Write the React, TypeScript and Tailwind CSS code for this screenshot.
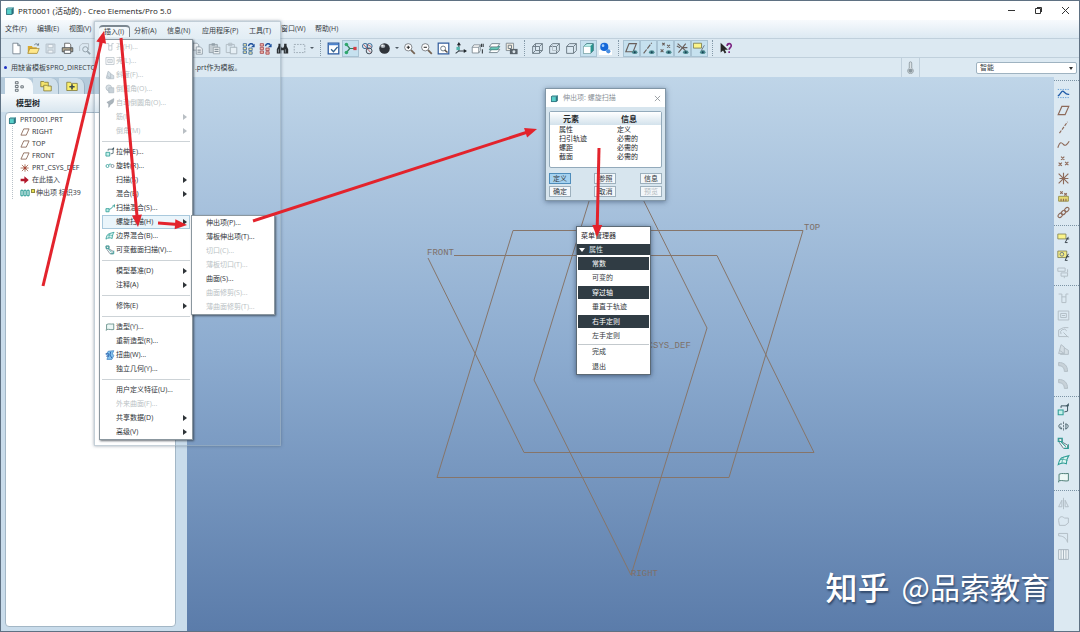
import React, { useState } from "react";
import clsx from "clsx";

const line = { fill: "none", stroke: "#6f7d88", strokeWidth: 1.2 };
const pale = { fill: "none", stroke: "#b3bec6", strokeWidth: 1.2 };
const teal = { fill: "none", stroke: "#2f9d96", strokeWidth: 1.3 };
const brown = { fill: "none", stroke: "#8d6a5a", strokeWidth: 1.4 };

const eye = (
  <>
    <ellipse cx="12" cy="12.5" rx="3.4" ry="2.4" fill="#4c8b8f" />
    <circle cx="12" cy="12.5" r="1.2" fill="#173f55" />
  </>
);

// All drawings use a 16x16 box
const icons: Record<string, React.ReactNode> = {
  cube: (
    <>
      <path d="M2 4l3-2h9v10l-3 2H2z" fill="#2d7480" />
      <path d="M2.5 4.5h8.5v9H2.5z" fill="#58cfc9" stroke="#27616e" />
      <path d="M3 4l2-1.5h8.5L11 4z" fill="#b9f1ee" />
    </>
  ),
  new: <path d="M3.5 1.5h6l3 3v10h-9zM9.5 1.5v3h3" fill="#fff" stroke="#6f7d88" />,
  open: (
    <>
      <path d="M1 5h5l1 1.5h5V14H1z" fill="#d9a92e" />
      <path d="M3.5 8H15l-2.5 6H1z" fill="#ffe88a" stroke="#9c8434" strokeWidth=".8" />
      <path d="M9 3.5c2-2 4-1.5 5 .5m0 0l.3-2.3M14 4l-2-.4" {...line} />
    </>
  ),
  save: (
    <>
      <path d="M2.5 2.5h11v11h-11z" fill="#d3dee6" stroke="#b3bec6" />
      <path d="M5 3h6v4H5zM5 10h6v3.5H5z" fill="#f0f5f8" stroke="#b3bec6" />
    </>
  ),
  print: (
    <>
      <path d="M4.5 7V1.5h6l1.5 2V7" fill="#fff" stroke="#555" />
      <path d="M1.5 7h13v5h-13z" fill="#b6aa92" stroke="#40464b" />
      <path d="M4 10h8v4H4z" fill="#fff" stroke="#40464b" />
      <path d="M11 8.5h2" stroke="#2a2a2a" />
    </>
  ),
  preview: (
    <>
      <path d="M2 11V5l3-3h8v8" {...pale} />
      <circle cx="9" cy="9" r="3.2" {...line} stroke="#93a1ab" />
      <path d="M11.5 11.5L15 15" {...line} stroke="#93a1ab" strokeWidth="2" />
    </>
  ),
  copy: (
    <>
      <path d="M2.5 1.5h5l2 2V10h-7z" fill="#eef3f6" stroke="#8b98a1" />
      <path d="M6.5 6h5l2.5 2.5V15H6.5z" fill="#eef3f6" stroke="#8b98a1" />
      <path d="M8 10h4M8 12.5h4" {...line} />
    </>
  ),
  paste: (
    <>
      <path d="M1.5 3h10v10h-10z" fill="#c5ced4" stroke="#929fa8" />
      <path d="M4.5 1.5h4v3h-4z" fill="#929fa8" />
      <path d="M6.5 6.5h8v8h-8z" fill="#eff3f5" stroke="#929fa8" />
      <path d="M8 9h5M8 11.5h5" {...line} />
    </>
  ),
  pasteSpecial: (
    <>
      <path d="M1.5 3h10v10h-10z" {...pale} />
      <path d="M4.5 1.5h4v3h-4z" {...pale} />
      <path d="M6.5 6.5h8v8h-8z" fill="#e6eff5" stroke="#9eabb4" />
    </>
  ),
  regen: (
    <>
      <path d="M1.5 2h4v3h-4zM1.5 6.5h4v3h-4zM1.5 11h4v3h-4zM8.5 7.5h4v3h-4zM8.5 12h4v3h-4z" fill="#f4e7a4" stroke="#38689a" />
      <path d="M8 5c.5-3 4-4 6-1.5" fill="none" stroke="#1c4f9c" strokeWidth="1.8" />
      <path d="M15.5 2v4.5H11z" fill="#1c4f9c" />
    </>
  ),
  regenMgr: (
    <>
      <path d="M1.5 2h4v3h-4zM1.5 6.5h4v3h-4zM1.5 11h4v3h-4zM8.5 7.5h4v3h-4zM8.5 12h4v3h-4z" fill="#f2b8ac" stroke="#a2474d" />
      <path d="M8 5c.5-3 4-4 6-1.5" fill="none" stroke="#1c4f9c" strokeWidth="1.8" />
      <path d="M15.5 2v4.5H11z" fill="#1c4f9c" />
    </>
  ),
  find: (
    <>
      <path d="M3 2h3v3l1 2h2l1-2V2h3v3l2 4v5H9.5v-4h-3v4H1V9l2-4z" fill="#2b2f33" />
      <path d="M3 9v4M11.5 9v4" stroke="#9aa4ab" />
    </>
  ),
  marquee: <path d="M1.5 3h13v10h-13z" fill="none" stroke="#8f9da7" strokeDasharray="2 1.5" />,
  redraw: (
    <>
      <path d="M1.5 1.5h13v13h-13z" fill="#fff" stroke="#2a5aa0" strokeWidth="1.6" />
      <path d="M2 2h12v2H2z" fill="#4b83cf" />
      <path d="M5 9l3 3 5-6" fill="none" stroke="#35638f" strokeWidth="1.7" />
    </>
  ),
  spin: (
    <>
      <path d="M3 3l4 5h7M7 8l-4 5" fill="none" stroke="#31805c" strokeWidth="1.5" />
      <circle cx="3" cy="3" r="2.2" fill="#2fa76c" />
      <circle cx="3" cy="13" r="2.2" fill="#2fa76c" />
      <rect x="11.5" y="6" width="4" height="4" fill="#d33d44" />
    </>
  ),
  orient: (
    <>
      <circle cx="5" cy="5" r="3.2" {...line} stroke="#356a96" />
      <circle cx="10.5" cy="5" r="3.2" {...line} stroke="#356a96" />
      <circle cx="10" cy="11" r="3.6" {...line} stroke="#3e4a55" />
      <path d="M3 3l9 10M8 3l5 3" stroke="#b04c50" />
    </>
  ),
  ball: (
    <>
      <circle cx="8" cy="8" r="6.5" fill="#2f343a" />
      <ellipse cx="6" cy="5" rx="3" ry="2.3" fill="#a9b1b8" />
      <ellipse cx="5.5" cy="4.5" rx="1.3" ry="1" fill="#f4f6f7" />
    </>
  ),
  zoomIn: (
    <>
      <circle cx="6.5" cy="6.5" r="4.5" fill="#fff" stroke="#6a6f75" />
      <path d="M4.5 6.5h4M6.5 4.5v4" stroke="#27292b" strokeWidth="1.3" />
      <path d="M10 10l4.5 4.5" stroke="#756353" strokeWidth="2.2" />
    </>
  ),
  zoomOut: (
    <>
      <circle cx="6.5" cy="6.5" r="4.5" fill="#fff" stroke="#6a6f75" />
      <path d="M4.5 6.5h4" stroke="#27292b" strokeWidth="1.3" />
      <path d="M10 10l4.5 4.5" stroke="#756353" strokeWidth="2.2" />
    </>
  ),
  refit: (
    <>
      <path d="M1.5 1.5h13v13h-13z" fill="#fff" stroke="#335e9d" strokeWidth="1.5" />
      <circle cx="7.5" cy="8" r="3" {...line} />
      <path d="M9.5 10l3.5 3" stroke="#5b5149" strokeWidth="1.8" />
    </>
  ),
  reorient: (
    <>
      <path d="M6 2v9h8M6 11l-4 3" fill="none" stroke="#333b42" strokeWidth="1.3" />
      <path d="M6 0L3.5 4h5zM16 11l-4-2.5v5z" fill="#23292e" />
      <path d="M3 6h4v4H3z" fill="#50b7ae" />
    </>
  ),
  views: (
    <>
      <path d="M1.5 6.5h8v7h-8zM1.5 6.5l2-3h8l-2 3M11.5 3.5v7l-2 3" fill="#fff" stroke="#75818a" />
      <path d="M13 2v4M15 2v4M14 9v5" stroke="#33393e" strokeWidth="1.3" />
    </>
  ),
  layers: (
    <>
      <path d="M1.5 13l3-4h10l-3 4z" fill="#fff" stroke="#657580" />
      <path d="M1.5 9.5l3-4h10l-3 4z" fill="#68c8b8" stroke="#39817b" />
      <path d="M1.5 6l3-4h10l-3 4z" fill="#fff" stroke="#657580" />
    </>
  ),
  viewMgr: (
    <>
      <path d="M1.5 1.5h9v9h-9z" fill="#f3eee2" stroke="#75818a" />
      <path d="M4 4h4v4H4z" {...line} />
      <path d="M6 8.5h9.5V15H6z" fill="#59636b" />
      <circle cx="11" cy="12" r="1.8" fill="#d9e2e8" />
    </>
  ),
  wire: (
    <path d="M2 5.5h8.5V14H2zM5.5 2H14v8.5H5.5zM2 5.5L5.5 2M10.5 5.5L14 2M10.5 14l3.5-3.5M2 14l3.5-3.5" {...line} />
  ),
  hidden: (
    <>
      <path d="M2 5.5h8.5V14H2zM2 5.5L5.5 2H14v8.5L10.5 14M10.5 5.5L14 2" {...line} />
      <path d="M5.5 3v7.5H13" {...pale} />
    </>
  ),
  noHidden: <path d="M2 5.5h8.5V14H2zM2 5.5L5.5 2H14v8.5L10.5 14M10.5 5.5L14 2" {...line} />,
  shaded: (
    <>
      <path d="M2 5.5L5.5 2H14v8.5L10.5 14H2z" fill="#27958f" stroke="#43757d" />
      <path d="M2 5.5h8.5V14H2z" fill="#fff" />
      <path d="M2.5 5L6 2.5h7L10.5 5z" fill="#b9eeea" />
    </>
  ),
  realism: (
    <>
      <path d="M0 10h16v6H0z" fill="#fff" />
      <circle cx="6.5" cy="6" r="5" fill="#1668d8" />
      <circle cx="5" cy="4.5" r="1.6" fill="#a5d0ff" />
      <circle cx="11.5" cy="11.5" r="2.6" fill="#4b8fe2" />
    </>
  ),
  planeShow: (
    <>
      <path d="M1 12L5 2h9l-4 10z" {...brown} stroke="#695f5b" />
      {eye}
    </>
  ),
  axisShow: (
    <>
      <path d="M2 14L12 1" {...brown} stroke="#695f5b" strokeDasharray="6 1.5" />
      {eye}
    </>
  ),
  pointShow: (
    <>
      <path d="M2 9l3.5 3.5M5.5 9L2 12.5M4 1l3 3M7 1L4 4M10 3.5l3.5 3.5M13.5 3.5L10 7" {...brown} stroke="#695f5b" />
      {eye}
    </>
  ),
  csysShow: (
    <>
      <path d="M2 2l10 9M12 2L3 13M7 7h7M1 5l4 2" {...brown} stroke="#695f5b" />
      {eye}
    </>
  ),
  noteShow: (
    <>
      <path d="M.5 1.5h10v6H.5z" fill="#fbf48a" stroke="#77774a" />
      <path d="M14 4l-4 7h4" {...line} />
      {eye}
    </>
  ),
  help: (
    <>
      <path d="M2 1v12l3-2.5L7 14l2-1-2-3.5h4z" fill="#272727" />
      <path d="M10 5c0-4 5.5-4 5 0 0 2-2.5 2-2.5 4.5M12.5 11.5v2" fill="none" stroke="#7c2483" strokeWidth="2" />
    </>
  ),
  sketch: (
    <>
      <path d="M1 3h14M1 13h14" stroke="#4b8ed0" strokeDasharray="1.5 1.5" />
      <path d="M1 11c3-1 4-6 6-6s3 5 8 4" fill="none" stroke="#1f5ba8" strokeWidth="1.5" />
    </>
  ),
  plane: <path d="M1.5 13L6 3h8.5L10 13z" {...brown} />,
  axis: <path d="M3 15L13 1" {...brown} strokeDasharray="4 1.5" />,
  curve: <path d="M1 12C4 3 6 6 8 8s4 1 7-4" {...brown} />,
  points: <path d="M2 9.5l4 4M6 9.5l-4 4M5 2l4 4M9 2L5 6M10 8.5l4 4M14 8.5l-4 4" {...brown} />,
  csys: <path d="M8 1v14M2 2l12 12M14 2L2 14M3 8h11" {...brown} />,
  analysis: (
    <>
      <path d="M2 9h12v6H2z" fill="#e7db74" stroke="#8e863e" />
      <path d="M5 12v3M8 12v3M11 12v3M4 3l3 3M7 3L4 6M9 5l3 3M12 5L9 8" {...brown} />
    </>
  ),
  refs: (
    <>
      <ellipse cx="4" cy="11.5" rx="3" ry="2.2" transform="rotate(-45 4 11.5)" {...brown} />
      <ellipse cx="8" cy="8" rx="3" ry="2.2" transform="rotate(-45 8 8)" {...brown} />
      <ellipse cx="12" cy="4.5" rx="3" ry="2.2" transform="rotate(-45 12 4.5)" {...brown} />
    </>
  ),
  note: (
    <>
      <path d="M1 2.5h10v6H1z" fill="#fbf48a" stroke="#7f7f50" />
      <path d="M14 6l-4 7h3M11 8.5h4" {...line} stroke="#39444c" />
    </>
  ),
  noteLoop: (
    <>
      <path d="M1 2.5h11v8H1z" fill="#f2ea86" stroke="#7f7f50" />
      <circle cx="6" cy="6.5" r="2.3" {...line} />
      <path d="M14 6l-4 8h3M11 9.5h4" {...line} stroke="#39444c" />
    </>
  ),
  notePale: <path d="M1 2.5h9v4H1zM5 8.5h8v4H5zM13 4v4M9 12.5V15" {...pale} />,
  hole: <path d="M2 2.5h4V13h5V2.5h3M6 6h5" {...pale} />,
  shell: <path d="M1.5 2.5h13v11h-13zM4.5 5.5h7v5h-7zM6 8h4" {...pale} />,
  rib: <path d="M2 13V5l6-3h6M2 13h12M5 10a4 4 0 017-4M8 8l6 6" {...pale} />,
  draft: <path d="M2 13L5 2l4 3v8zM9 6l5 3v5H4M3 9l6 4" {...pale} fill="#d3dde4" />,
  round: <path d="M2 3c7 0 11 4 11 11H9c0-4-2-7-7-7z" {...pale} fill="#c7d1d8" />,
  roundMenu: (
    <>
      <circle cx="6" cy="6" r="4.5" {...pale} fill="#d8e0e5" />
      <path d="M6 6h8v8H6zM3 9l5 5" {...pale} fill="#c7d1d8" />
    </>
  ),
  autoRound: <path d="M14 1L3 7l3 2v6l3-5c4-1 5-4 5-9z" fill="#aab4bb" stroke="#98a3ab" />,
  extrude: (
    <>
      <path d="M1.5 8.5h6v6h-6z" {...teal} fill="#c4f0ea" />
      <path d="M5 6V3.5h8V10M9 11l4-1" {...line} stroke="#3c5560" />
      <path d="M14.5 0v4h-4z" fill="#3c5560" />
    </>
  ),
  revolve: (
    <>
      <path d="M8 2v12" {...line} strokeDasharray="3 1" />
      <path d="M6 5c-5-1-5 6 0 6M10 5c5-1 5 6 0 6M4 8l2 3M11 5v6" {...line} stroke="#4c646e" />
    </>
  ),
  revolveSmall: (
    <>
      <circle cx="4" cy="8" r="2.4" {...teal} />
      <circle cx="12" cy="8" r="2.4" {...line} />
      <path d="M6 7c1-3 3-3 4-1" {...teal} />
    </>
  ),
  sweep: (
    <>
      <path d="M2 2h4v4l7 4v4H8L3 7z" {...line} fill="#f4f8fa" />
      <path d="M5 6l6 6M1.5 1.5h5v4h-5zM14 9v5H9" {...teal} />
    </>
  ),
  blendSweep: (
    <>
      <path d="M1.5 9h5v5h-5zM6.5 10c5 0 4-4 7-5" {...teal} fill="#bceee8" />
      <path d="M15 2v5M12 4.5h4" {...teal} />
    </>
  ),
  boundary: (
    <>
      <path d="M1.5 13c1-5 2-8 6-9l7-2c-2 3-3 6-3 10-4-2-7-1-10 1z" {...teal} fill="#dcf5f1" />
      <path d="M4 7c4-1 6 0 9 1M8 4c-1 3-2 5-2 8" {...teal} strokeWidth=".9" />
    </>
  ),
  style: <path d="M2.5 12V4c4-2 7 0 11.5-1v9c-4 1-7-1-11.5 0zM2 12v2" {...line} stroke="#4d7d76" fill="#edf8f6" />,
  warp: (
    <>
      <path d="M5 2l9-1-2 5 2 3-3 6H3l2-5-3-3z" fill="#84c3ee" stroke="#2f72b5" />
      <path d="M1 6h5v4H2M9 3l-1 5 3 5" fill="none" stroke="#2458a5" strokeWidth="1.3" />
    </>
  ),
  mirror: <path d="M8 1v14M6 4v8H2zM10 4v8h4z" {...pale} />,
  merge: <path d="M2 8c0-5 5-6 7-3h5v6l-4 3H3z" {...pale} />,
  trim: <path d="M2 3h11v11c-2-6-6-8-11-8z" {...pale} />,
  table: <path d="M2 2h12v12H2zM5 2v12M8 2v12M11 2v12" {...pale} stroke="#a9b5be" fill="#eef3f6" />,
  tabTree: <path d="M2 1h4v3H2zM2 6.5h4v3H2zM2 12h4v3H2zM10 7h3.5v3H10z" {...line} stroke="#525c64" />,
  tabFolders: (
    <>
      <path d="M1 2h4l1 1h5v6H1z" fill="#f4e36b" stroke="#7c7332" />
      <path d="M5 7h4l1 1h5v6.5H5z" fill="#f9ee8c" stroke="#7c7332" />
    </>
  ),
  tabFavorites: (
    <>
      <path d="M1 3h5l1 1.5h8V14H1z" fill="#f9ee6c" stroke="#7c7332" />
      <path d="M8 5.5v7M4.5 9h7" stroke="#3d4b4d" strokeWidth="2.2" />
    </>
  ),
  insertHere: <path d="M1 6h6V2l7 6-7 6v-4H1z" fill="#b3182c" />,
  helix: <path d="M1 4h4v8H1zM6 4h4v8H6zM11 4h4v8h-4zM3 2v12M8 2v12M13 2v12" {...teal} strokeWidth="1.2" />,
  csysTree: (
    <>
      <path d="M8 2v12M3 3l10 10M13 3L3 13M1 8h13" stroke="#a3654e" fill="none" strokeWidth="1.3" />
      <path d="M6 6h4v4H6z" fill="#a84838" />
    </>
  ),
  thermometer: (
    <>
      <path d="M6.5 9V2.5a1.5 1.5 0 013 0V9a3.5 3.5 0 11-3 0z" fill="#dce3e7" stroke="#89959d" />
      <circle cx="8" cy="12" r="2.6" fill="#8b989f" />
    </>
  ),
};

function Icon({ name, className = "size-[13px]" }: { name: string; className?: string }) {
  return (
    <svg viewBox="0 0 16 16" className={clsx("shrink-0", className)} aria-hidden="true">
      {icons[name]}
    </svg>
  );
}

function ToolButton({ name, active }: { name: string; active?: boolean }) {
  return (
    <button
      type="button"
      aria-label={name}
      className={clsx(
        "flex h-[17px] w-[17px] shrink-0 items-center justify-center",
        active && "border border-[#a9c3d3] bg-[#c6e1ef]"
      )}
    >
      <Icon name={name} />
    </button>
  );
}

const Divider = () => <span className="mx-1 h-4 shrink-0 border-l border-dotted border-[#8499a8]" />;

function Dot() {
  return (
    <svg viewBox="0 0 8 4" className="h-1 w-2 shrink-0" aria-hidden="true">
      <path d="M2 1h4L4 3z" fill="#4f5b64" />
    </svg>
  );
}

type Item = { label: string; icon?: string; off?: boolean; sub?: boolean };

const insertMenu: Item[][] = [
  [
    { label: "孔(H)...", icon: "hole", off: true },
    { label: "壳(L)...", icon: "shell", off: true },
    { label: "斜度(F)...", icon: "draft", off: true },
    { label: "倒圆角(O)...", icon: "roundMenu", off: true },
    { label: "自动倒圆角(O)...", icon: "autoRound", off: true },
    { label: "筋(I)", off: true, sub: true },
    { label: "倒角(M)", off: true, sub: true },
  ],
  [
    { label: "拉伸(E)...", icon: "extrude" },
    { label: "旋转(R)...", icon: "revolveSmall" },
    { label: "扫描(S)", sub: true },
    { label: "混合(B)", sub: true },
    { label: "扫描混合(S)...", icon: "blendSweep" },
    { label: "螺旋扫描(H)", sub: true },
    { label: "边界混合(B)...", icon: "boundary" },
    { label: "可变截面扫描(V)...", icon: "sweep" },
  ],
  [
    { label: "模型基准(D)", sub: true },
    { label: "注释(A)", sub: true },
  ],
  [{ label: "修饰(E)", sub: true }],
  [
    { label: "造型(Y)...", icon: "style" },
    { label: "重新造型(R)..." },
    { label: "扭曲(W)...", icon: "warp" },
    { label: "独立几何(Y)..." },
  ],
  [
    { label: "用户定义特征(U)..." },
    { label: "外来曲面(F)...", off: true },
    { label: "共享数据(D)", sub: true },
    { label: "高级(V)", sub: true },
  ],
];

const helicalMenu: Item[] = [
  { label: "伸出项(P)..." },
  { label: "薄板伸出项(T)..." },
  { label: "切口(C)...", off: true },
  { label: "薄板切口(T)...", off: true },
  { label: "曲面(S)..." },
  { label: "曲面修剪(S)...", off: true },
  { label: "薄曲面修剪(T)...", off: true },
];

function MenuRow({ item, selected }: { item: Item; selected?: boolean }) {
  return (
    <button
      type="button"
      disabled={item.off}
      className={clsx(
        "flex h-[14px] w-full items-center border text-left",
        selected ? "border-[#a9c9dd] bg-[#eaf5fb]" : "border-transparent",
        item.off ? "text-[#b9bfc4]" : "text-[#2e3337]"
      )}
    >
      <span className="flex w-[13px] shrink-0 justify-center">
        {item.icon && <Icon name={item.icon} className="size-[10px]" />}
      </span>
      <span className="grow whitespace-nowrap">{item.label}</span>
      {item.sub && (
        <svg viewBox="0 0 4 6" className="mr-0.5 h-1.5 w-1 shrink-0" aria-hidden="true">
          <path d="M0 0l4 3-4 3z" fill="currentColor" />
        </svg>
      )}
    </button>
  );
}

function InsertMenu() {
  return (
    <div className="absolute top-5 left-[93px] h-[425px] w-[187px] border border-[#9fb0be]/60 shadow-[0_0_3px_rgba(60,80,100,0.5)]">
      <nav className="flex h-[17px] items-center bg-linear-to-b from-[#edf4f9] to-[#e2edf4] pl-1">
        <button type="button" className="mr-1 h-3 w-[31px] rounded-t-sm border-t-2 border-r border-[#7b8790] bg-[#f2f7fa] text-center leading-[10px]">
          插入(I)
        </button>
        <button type="button" className="w-[33px] text-left whitespace-nowrap">分析(A)</button>
        <button type="button" className="w-[35px] text-left whitespace-nowrap">信息(N)</button>
        <button type="button" className="w-[47px] text-left whitespace-nowrap">应用程序(P)</button>
        <button type="button" className="text-left whitespace-nowrap">工具(T)</button>
      </nav>
      <div className="ml-1 w-[94px] border border-[#8b979f] bg-white px-0.5 shadow-[1px_1px_2px_rgba(40,50,60,0.7)]">
        {insertMenu.map((group, index) => (
          <div key={index}>
            {index > 0 && <hr className="my-[3px] border-[#cdd3d7]" />}
            {group.map((item) => (
              <MenuRow key={item.label} item={item} selected={item.label === "螺旋扫描(H)"} />
            ))}
          </div>
        ))}
      </div>
      <div className="absolute top-[193px] left-[96px] w-[84px] border border-[#8b979f] bg-white shadow-[1px_1px_2px_rgba(40,50,60,0.7)]">
        {helicalMenu.map((item) => (
          <MenuRow key={item.label} item={item} />
        ))}
      </div>
    </div>
  );
}

const tree = [
  { label: "RIGHT", icon: "plane" },
  { label: "TOP", icon: "plane" },
  { label: "FRONT", icon: "plane" },
  { label: "PRT_CSYS_DEF", icon: "csysTree" },
  { label: "在此插入", icon: "insertHere" },
];

function ModelTree() {
  return (
    <aside className="flex w-[186px] shrink-0 flex-col bg-[#c9dceb]">
      <div className="flex h-[17px] items-end bg-[#b4cadb] pl-1">
        <button type="button" aria-label="模型树" className="flex h-4 w-7 items-center justify-center rounded-tr-lg bg-[#f5f9fb]">
          <Icon name="tabTree" className="size-[11px]" />
        </button>
        <button type="button" aria-label="文件夹浏览器" className="flex h-4 w-[26px] items-center justify-center rounded-tr-lg border-r border-[#9bb3c5] bg-[#cfdfea]">
          <Icon name="tabFolders" className="size-[12px]" />
        </button>
        <button type="button" aria-label="收藏夹" className="flex h-4 w-[26px] items-center justify-center rounded-tr-lg border-r border-[#9bb3c5] bg-[#cfdfea]">
          <Icon name="tabFavorites" className="size-[12px]" />
        </button>
      </div>
      <h2 className="h-[18px] bg-linear-to-b from-[#f7fafc] to-[#d9e6ef] pl-[15px] text-[8px] leading-[18px] font-bold text-[#22282d]">
        模型树
      </h2>
      <div className="mr-[11px] mb-1 ml-1 grow rounded-sm border border-[#a3b7c6] bg-white pt-px pl-0.5 font-[family-name:'Noto_Sans','Noto_Sans_CJK_SC',sans-serif] text-[#3a4046]">
        <div className="flex h-3 items-center gap-[3px]">
          <Icon name="cube" className="size-[9px]" />
          PRT0001.PRT
        </div>
        <ul className="ml-1 border-l border-dotted border-[#b8c1c8] pl-[7px]">
          {tree.map((node) => (
            <li key={node.label} className="flex h-3 items-center gap-0.5">
              <Icon name={node.icon} className="size-[10px]" />
              {node.label}
            </li>
          ))}
          <li className="flex h-[13px] items-center gap-px">
            <Icon name="helix" className="size-[10px]" />
            <span className="mb-1 size-1 border border-[#8f8a3c] bg-[#e9e04f]" />
            伸出项 标识39
          </li>
        </ul>
      </div>
    </aside>
  );
}

function DatumPlanes() {
  return (
    <svg
      viewBox="187 77 866 554"
      className="absolute top-0 left-0 h-[554px] w-[866px] font-['Liberation_Mono',monospace] text-[9px]"
      aria-hidden="true"
    >
      <g fill="none" stroke="#86756a" strokeWidth="1">
        <path d="M513 230.5H803L729 477.5H437z" />
        <path d="M454 255.5H717L814 452.5H524L428 258" />
        <path d="M610 133L707 328 631 575 534 380z" />
      </g>
      <g fill="#7d7069">
        <text x="427" y="255">FRONT</text>
        <text x="804" y="230">TOP</text>
        <text x="631" y="576">RIGHT</text>
        <text x="626" y="348">PRT_CSYS_DEF</text>
      </g>
    </svg>
  );
}

const elements = [
  ["属性", "定义"],
  ["扫引轨迹", "必需的"],
  ["螺距", "必需的"],
  ["截面", "必需的"],
];

function ElementDialog() {
  const button = "h-[11px] w-[22px] border border-[#9db0bd] bg-[#f3f7fa] text-center leading-[9px]";
  return (
    <section className="absolute top-[11px] left-[358px] w-[121px] border border-[#8196a6] bg-[#d7e5ee] shadow-[0_1px_5px_rgba(50,70,100,0.6)]">
      <header className="flex h-[18px] items-center gap-1 bg-white px-1 text-[#8b9298]">
        <Icon name="cube" className="size-[9px]" />
        <h3 className="grow">伸出项: 螺旋扫描</h3>
        <button type="button" aria-label="关闭">
          <svg viewBox="0 0 8 8" className="size-[7px]" stroke="#858b90" strokeWidth=".9">
            <path d="M1 1l6 6M7 1L1 7" />
          </svg>
        </button>
      </header>
      <div className="p-[3px] pt-1">
        <div className="h-[57px] rounded-xs border border-[#93aabb] bg-white">
          <table className="w-full table-fixed text-left leading-[9px] text-[#25292c]">
            <thead className="h-[13px] bg-linear-to-b from-white to-[#d3e2ec] text-[8px]">
              <tr>
                <th className="w-[67px] pl-[13px] font-bold">元素</th>
                <th className="pl-1 font-bold">信息</th>
              </tr>
            </thead>
            <tbody>
              {elements.map(([name, info]) => (
                <tr key={name}>
                  <td className="pl-[9px]">{name}</td>
                  <td>{info}</td>
                </tr>
              ))}
            </tbody>
          </table>
        </div>
        <div className="mt-[5px] grid grid-cols-3 gap-y-0.5">
          <button type="button" className="h-[11px] w-[22px] border border-[#4f8dbb] bg-[#a5d2f0] text-center leading-[9px]">定义</button>
          <button type="button" className={clsx(button, "justify-self-center")}>参照</button>
          <button type="button" className={clsx(button, "justify-self-end")}>信息</button>
          <button type="button" className={button}>确定</button>
          <button type="button" className={clsx(button, "justify-self-center")}>取消</button>
          <button type="button" disabled className={clsx(button, "justify-self-end text-[#b4bcc2]")}>预览</button>
        </div>
      </div>
    </section>
  );
}

const choices = [
  ["常数", "可变的"],
  ["穿过轴", "垂直于轨迹"],
  ["右手定则", "左手定则"],
];

function MenuManager() {
  const [picked, setPicked] = useState(["常数", "穿过轴", "右手定则"]);

  const pick = (row: number, value: string) => {
    setPicked(picked.map((old, i) => (i === row ? value : old)));
  };

  return (
    <section className="absolute top-[149px] left-[389px] w-[75px] border border-[#5c6a75] bg-white shadow-[0_1px_5px_rgba(40,60,90,0.7)]">
      <h3 className="h-[17px] pl-1 leading-[17px] text-[#1f2427]">菜单管理器</h3>
      <div className="flex h-[11px] items-center gap-1 bg-[#303c44] pl-0.5 text-[#dfe5e8]">
        <svg viewBox="0 0 6 4" className="h-1 w-1.5" aria-hidden="true">
          <path d="M0 0h6L3 4z" fill="#fff" />
        </svg>
        属性
      </div>
      <div className="flex flex-col gap-0.5 px-px pt-0.5">
        {choices.map((group, row) => (
          <div key={row} className="flex flex-col gap-px">
            {group.map((value) => (
              <button
                key={value}
                type="button"
                onClick={() => pick(row, value)}
                className={clsx(
                  "h-[13px] pl-[14px] text-left leading-[13px]",
                  picked[row] === value ? "bg-[#303c44] text-white" : "text-[#30363a]"
                )}
              >
                {value}
              </button>
            ))}
          </div>
        ))}
        <div className="flex flex-col gap-px border-t border-[#c3c9cd] text-[#30363a]">
          <button type="button" className="h-[13px] pl-[14px] text-left leading-[13px]">完成</button>
          <button type="button" className="h-[15px] pl-[14px] text-left leading-[13px]">退出</button>
        </div>
      </div>
    </section>
  );
}

const sideTools = [
  ["sketch", "plane", "axis", "curve", "points", "csys", "analysis", "refs"],
  ["note", "noteLoop", "notePale"],
  ["hole", "shell", "rib", "draft", "round", "round"],
  ["extrude", "revolve", "sweep", "boundary", "style"],
  ["mirror", "merge", "trim", "table"],
];

// Arrows run tail to head in page pixels
const arrows = [
  [43, 286, 104, 31],
  [121, 38, 138, 227],
  [158, 223, 187, 225],
  [253, 221, 537, 129],
  [599, 148, 597, 237],
];

function Arrows() {
  return (
    <svg className="pointer-events-none absolute -top-px -left-px h-full w-full" aria-hidden="true">
      {arrows.map(([x1, y1, x2, y2], index) => {
        const angle = Math.atan2(y2 - y1, x2 - x1);
        const length = Math.hypot(x2 - x1, y2 - y1);
        return (
          <g key={index} transform={`translate(${x1} ${y1}) rotate(${(angle * 180) / Math.PI})`} fill="#e3232c">
            <path d={`M0 -1.5H${length - 9}V1.5H0z`} />
            <path d={`M${length} 0l-12 -5v10z`} />
          </g>
        );
      })}
    </svg>
  );
}

export default function App() {
  return (
    <div className="relative flex min-h-screen flex-col overflow-hidden border border-[#5f7183] bg-[#dce9f2] font-[family-name:'Open_Sans','Noto_Sans_CJK_SC',sans-serif] text-[7px] leading-[10px] text-[#343a3f]">
      <header className="flex h-[19px] items-center bg-white pl-1">
        <Icon name="cube" className="size-[10px]" />
        <h1 className="ml-[3px] grow text-[8px] text-[#222]">PRT0001 (活动的) - Creo Elements/Pro 5.0</h1>
        <div className="flex gap-[18px] pr-[9px]">
          <button type="button" aria-label="最小化">
            <svg viewBox="0 0 9 9" className="size-[9px]" fill="none" stroke="#333"><path d="M1 4.5h7" /></svg>
          </button>
          <button type="button" aria-label="还原">
            <svg viewBox="0 0 9 9" className="size-[9px]" fill="none" stroke="#333"><path d="M1.5 2.5h5v5h-5zM3 1.5h4.500V6" /></svg>
          </button>
          <button type="button" aria-label="关闭">
            <svg viewBox="0 0 9 9" className="size-[9px]" fill="none" stroke="#333"><path d="M1 1l7 7M8 1L1 8" /></svg>
          </button>
        </div>
      </header>

      <nav className="flex h-[18px] items-center bg-linear-to-b from-[#f7fafd] to-[#dce9f2] pl-1">
        <button type="button" className="w-8 text-left whitespace-nowrap">文件(F)</button>
        <button type="button" className="w-8 text-left whitespace-nowrap">编辑(E)</button>
        <button type="button" className="w-8 text-left whitespace-nowrap">视图(V)</button>
        <button type="button" className="ml-[180px] w-[34px] text-left whitespace-nowrap">窗口(W)</button>
        <button type="button" className="text-left whitespace-nowrap">帮助(H)</button>
      </nav>

      <div className="flex h-5 items-center border-y border-[#c0d0dc] pl-[7px]">
        <ToolButton name="new" />
        <ToolButton name="open" />
        <ToolButton name="save" />
        <ToolButton name="print" />
        <ToolButton name="preview" />
        <span className="w-24 shrink-0" />
        <ToolButton name="copy" />
        <ToolButton name="paste" />
        <ToolButton name="pasteSpecial" />
        <ToolButton name="regen" />
        <ToolButton name="regenMgr" />
        <ToolButton name="find" />
        <ToolButton name="marquee" />
        <Dot />
        <Divider />
        <ToolButton name="redraw" />
        <ToolButton name="spin" active />
        <ToolButton name="orient" />
        <ToolButton name="ball" />
        <Dot />
        <ToolButton name="zoomIn" />
        <ToolButton name="zoomOut" />
        <ToolButton name="refit" />
        <ToolButton name="reorient" />
        <ToolButton name="views" />
        <ToolButton name="layers" />
        <ToolButton name="viewMgr" />
        <Divider />
        <ToolButton name="wire" />
        <ToolButton name="hidden" />
        <ToolButton name="noHidden" />
        <ToolButton name="shaded" active />
        <ToolButton name="realism" />
        <Divider />
        <ToolButton name="planeShow" active />
        <ToolButton name="axisShow" active />
        <ToolButton name="pointShow" active />
        <ToolButton name="csysShow" active />
        <ToolButton name="noteShow" active />
        <Divider />
        <ToolButton name="help" />
      </div>

      <div className="flex h-[19px] items-center pl-[3px]">
        <span className="size-[3px] rounded-full bg-[#1c2fc4]" />
        <p className="ml-1 flex grow whitespace-nowrap">
          <span className="w-[184px]">用缺省模板$PRO_DIRECTO</span>
          <span>.prt作为模板。</span>
        </p>
        <div className="mr-14 flex h-full items-center border-x border-[#c0d0dc] px-0.5">
          <Icon name="thermometer" />
        </div>
        <label className="relative mr-0.5 w-[101px]">
          <select aria-label="过滤器" defaultValue="智能" className="block h-3 w-full appearance-none rounded-xs border border-[#9fb3c1] bg-white pl-[3px] leading-[10px]">
            <option>智能</option>
            <option>特征</option>
            <option>几何</option>
            <option>基准</option>
          </select>
          <svg viewBox="0 0 4 3" className="pointer-events-none absolute top-[5px] right-1 h-[3px] w-1" aria-hidden="true">
            <path d="M0 0h4L2 3z" fill="#333" />
          </svg>
        </label>
      </div>

      <div className="flex grow">
        <ModelTree />
        <main className="relative grow overflow-hidden bg-linear-to-b from-[#bfd5e8] via-[#8cabcf] to-[#5b7caa]">
          <DatumPlanes />
          <ElementDialog />
          <MenuManager />
          <p className="absolute right-1 bottom-[25px] flex gap-3 font-[family-name:'Noto_Sans_CJK_SC',sans-serif] text-[30px] leading-10 text-white [text-shadow:1px_2px_2px_rgba(30,50,80,0.7)]">
            <span className="text-[32px] font-medium">知乎</span>
            <span>@品索教育</span>
          </p>
        </main>
        <aside className="flex w-[25px] shrink-0 flex-col pt-[3px]">
          {sideTools.map((group, index) => (
            <div key={index} className="border-t border-dotted border-[#7b93a5] py-1 pl-px">
              {group.map((name, i) => (
                <ToolButton key={i} name={name} />
              ))}
            </div>
          ))}
        </aside>
      </div>

      <InsertMenu />
      <Arrows />
    </div>
  );
}
